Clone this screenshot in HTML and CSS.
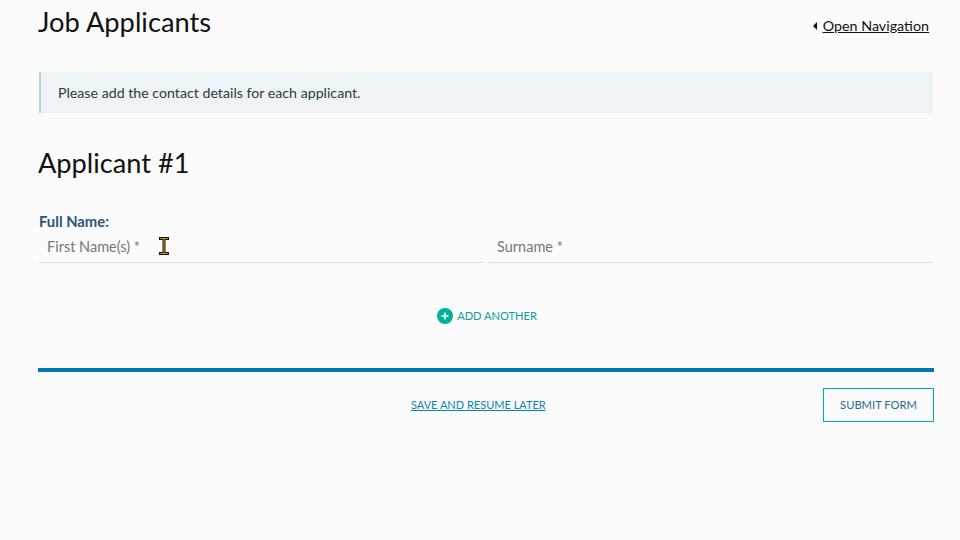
FILE: index.html
```html
<!DOCTYPE html>
<html lang="en">
<head>
<meta charset="utf-8">
<title>Job Applicants</title>
<link rel="stylesheet" href="styles.css">
</head>
<body>
<main class="page">
  <header class="top">
    <h1 class="title">Job Applicants</h1>
    <a class="nav-link" href="#"><span class="caret"></span><span class="nav-text">Open Navigation</span></a>
  </header>
  <p class="notice">Please add the contact details for each applicant.</p>
  <h2 class="subtitle">Applicant #1</h2>
  <div class="label">Full Name:</div>
  <div class="fields">
    <div class="field">First Name(s) *</div>
    <div class="field">Surname *</div>
  </div>
  <div class="add-row">
    <a class="add" href="#">
      <svg class="add-icon" viewBox="0 0 16 16" width="16" height="16"><circle cx="8" cy="8" r="8" fill="#00b09b"/><path d="M8 4.5v7M4.5 8h7" stroke="#fff" stroke-width="1.5"/></svg>
      <span>ADD ANOTHER</span>
    </a>
  </div>
  <div class="actions">
    <a class="save" href="#">SAVE AND RESUME LATER</a>
    <a class="submit" href="#">SUBMIT FORM</a>
  </div>
</main>
<svg class="cursor" viewBox="0 0 12 18" width="12" height="18"><path d="M1 1.5h10M1 16.5h10M6 1.5v15" stroke="#111" stroke-width="3"/><path d="M2 1.5h8M2 16.5h8M6 1.5v15" stroke="#c98a12" stroke-width="1.2"/></svg>
</body>
</html>
```
FILE: styles.css
```css
* { box-sizing: border-box; }
html, body { margin: 0; height: 100%; }
body { background: #fbfbfb; font-family: Lato, sans-serif; color: #111; }
.page { width: 960px; height: 540px; padding: 0 26px 0 38px; overflow: hidden; }
.top { display: flex; justify-content: space-between; align-items: flex-start; height: 72px; }
.title { margin: 4px 0 0; font-size: 27.3px; line-height: 36px; font-weight: 400; }
.nav-link { display: flex; align-items: center; gap: 6px; margin: 17px 5px 0 0; color: #111; font-size: 14.3px; line-height: 18px; }
.nav-text { text-decoration: underline; }
.caret { width: 0; height: 0; border-style: solid; border-width: 4px 4px 4px 0; border-color: transparent #111 transparent transparent; }
.notice { margin: 0 1px 0 1px; height: 41px; padding-left: 17px; background: #eef3f6; border-left: 2px solid #b5d3e4; font-size: 14.2px; line-height: 41px; color: #2a3a4a; }
.subtitle { margin: 33px 0 0; font-size: 27.2px; line-height: 34px; font-weight: 400; }
.label { margin: 32px 0 0 1px; font-size: 14.8px; line-height: 18px; font-weight: 700; color: #2a5578; }
.fields { display: grid; grid-template-columns: 444px 444px; gap: 6px; margin-left: 1px; }
.field { height: 33px; padding: 8px 0 0 8px; border-bottom: 1px solid #ddd; font-size: 14.5px; line-height: 18px; color: #73787c; }
.add-row { display: flex; justify-content: center; margin-top: 45px; padding-left: 2px; }
.add { display: flex; align-items: center; gap: 4px; color: #0a9fa0; font-size: 11.1px; line-height: 16px; text-decoration: none; }
.actions { display: flex; justify-content: space-between; align-items: flex-start; margin-top: 44px; border-top: 4px solid #0076b6; padding-top: 16px; }
.save { margin: 9px 0 0 373px; color: #0b84b5; font-size: 11px; line-height: 16px; }
.submit { display: block; width: 111px; height: 34px; border: 1px solid #00ae9e; color: #2a6a90; font-size: 11.2px; line-height: 32px; text-align: center; text-decoration: none; }
.cursor { position: absolute; left: 158px; top: 237px; }
```
